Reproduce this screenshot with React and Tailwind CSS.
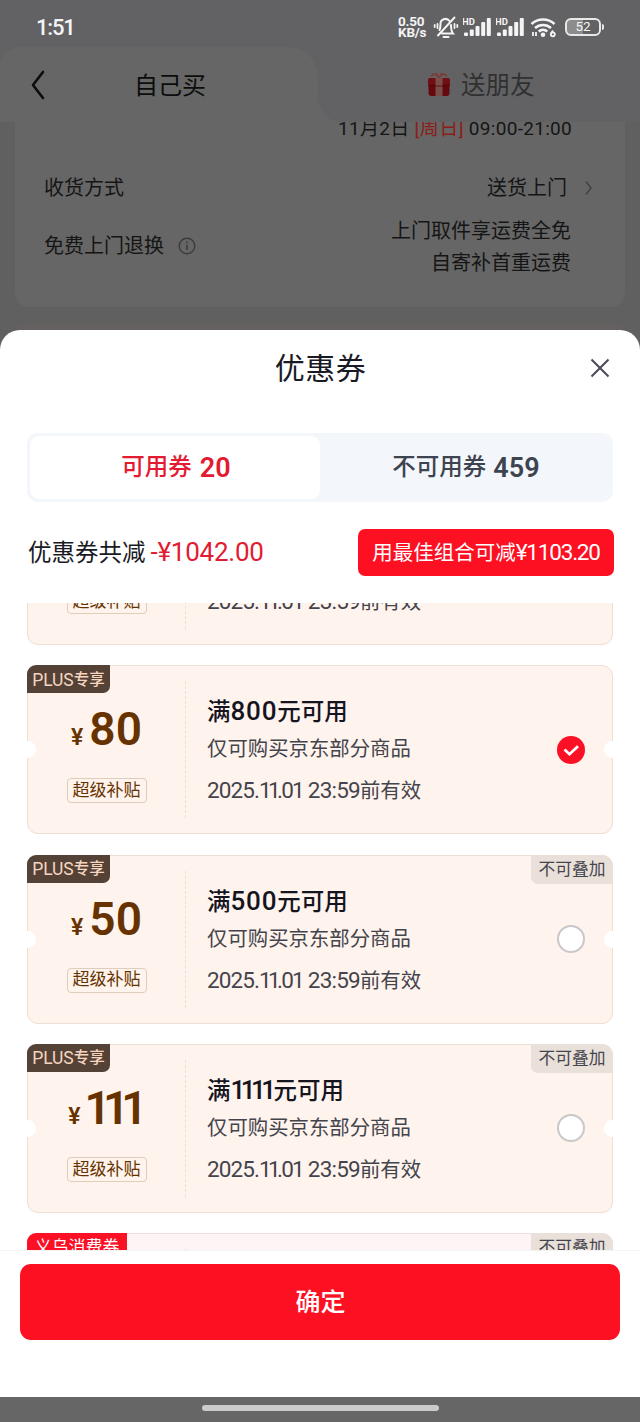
import React from "react";

function StatusBar() {
  return (
    <div className="flex h-[47px] items-center justify-between bg-[#626264] pt-[7px] pl-[36px] pr-[36px] text-[#f4f4f4]">
      <span className="pt-px text-[22px] leading-6 font-medium tracking-[-1.2px]">1:51</span>
      <div className="flex items-center">
        <div className="w-[32px] text-[13.500px] leading-[11px] font-bold tracking-[-0.2px] whitespace-nowrap">
          <div>0.50</div>
          <div>KB/s</div>
        </div>
        <svg className="ml-[3px]" width="26" height="24" viewBox="0 0 26 24" fill="none" stroke="#f4f4f4" strokeWidth="2" strokeLinecap="round">
          <path d="M9 18.500h11c-2-2.500-2-4-2-8.500M6.500 15c1-2 1-3.500 1-5.500a5 5 0 0 1 9-3.500M21.500 2.500 5 20.500M10.500 22h5" />
          <path d="M4.500 9v4M1.700 10v2M21.500 9v4M24.300 10v2" strokeWidth="1.800" />
        </svg>
        <Signal className="ml-[4px]" />
        <Signal className="ml-[5px]" />
        <svg className="ml-[6px]" width="27" height="22" viewBox="0 0 27 22" fill="none" stroke="#f4f4f4" strokeWidth="2.600">
          <path d="M1.500 8a17 17 0 0 1 23 0M5 12a12 12 0 0 1 16 0M8.700 15.500a6.500 6.500 0 0 1 8.600 0" />
          <circle cx="13" cy="18.700" r="2.300" fill="#f4f4f4" stroke="none" />
          <path d="M3 16v4M6 20v-4M23 14.500l-2.200 3.500" strokeWidth="1.800" />
          <circle cx="22.800" cy="18.300" r="2" strokeWidth="1.800" />
        </svg>
        <div className="ml-[8px] flex h-[18px] w-[36px] items-center justify-center rounded-[6px] border-2 border-[#e8e8e8] bg-linear-to-r from-[#8c8c8c] from-50% to-transparent to-50% text-[13.500px] leading-none">
          52
        </div>
        <div className="ml-[1px] h-[6px] w-[2px] rounded-r bg-[#e8e8e8]" />
      </div>
    </div>
  );
}

function Signal({ className }) {
  return (
    <svg className={className} width="28" height="20" viewBox="0 0 28 20" fill="#f4f4f4">
      <text x="-1" y="7.500" fontSize="9.500" fontWeight="700" fontFamily="Roboto, sans-serif">HD</text>
      <rect x="1" y="15.500" width="4" height="3.500" rx="1" />
      <rect x="6.800" y="12.500" width="4" height="6.500" rx="1" />
      <rect x="12.500" y="9" width="4" height="10" rx="1" />
      <rect x="18.200" y="5" width="4" height="14" rx="1" />
      <rect x="23.800" y="1" width="4" height="18" rx="1" />
    </svg>
  );
}

function Gift() {
  return (
    <svg width="24" height="25" viewBox="0 0 24 25">
      <path d="M12 6C9 1 4 1 5 5M12 6c3-5 8-5 7-1M12 6 9 1M12 6l3-5" fill="none" stroke="#7d3a32" strokeWidth="1.500" />
      <rect x="1" y="6" width="22" height="9" rx="2" fill="#701014" />
      <rect x="1.500" y="12" width="21" height="12" rx="3" fill="#66090e" />
      <path d="M8.500 6h7v18h-7z" fill="#785049" />
      <path d="M1.500 14h21" stroke="#540609" strokeWidth="0.800" />
    </svg>
  );
}

function OrderPage() {
  return (
    <div className="h-[350px] bg-[#606060] text-[#151515]">
      <StatusBar />
      <div className="flex h-[75px] bg-[#626264]">
        <div className="flex w-[318px] items-center rounded-tl-[20px] rounded-tr-[30px] bg-[#666666]">
          <svg className="ml-[30px]" width="16" height="32" viewBox="0 0 16 32" fill="none" stroke="#0c0c0c" strokeWidth="2.600" strokeLinecap="round" strokeLinejoin="round">
            <path d="M13 3 3 16l10 13" />
          </svg>
          <span className="ml-[88px] pt-[2px] text-[24px] text-[#0c0c0c]">自己买</span>
        </div>
        <div className="flex flex-1 bg-linear-to-b from-[#626264] from-50% to-[#666666] to-50%">
          <div className="flex flex-1 items-center rounded-bl-[24px] bg-[#626264] pl-[109px]">
            <Gift />
            <span className="ml-[10px] pt-[3px] text-[24.500px] text-[#303031]">送朋友</span>
          </div>
        </div>
      </div>
      <div className="mx-[15px] h-[185px] rounded-b-[14px] bg-[#666666] px-[29px] text-[20px]">
        <div className="h-[17px] overflow-hidden pr-[24px]">
          <div className="mt-[-8px] text-right text-[19px] leading-[30px] tracking-[0.3px]">
            <span>11月2日</span> <span className="text-[#8c1d18]">[周日]</span>{" "}
            <span>09:00-21:00</span>
          </div>
        </div>
        <div className="mt-[34px] flex h-[30px] items-center justify-between">
          <span>收货方式</span>
          <span className="flex items-center">
            送货上门
            <svg className="ml-[17px]" width="12" height="16" viewBox="0 0 12 16" fill="none" stroke="#434343" strokeWidth="1.500">
              <path d="M2 1.500 7 8l-5 6.500" />
            </svg>
          </span>
        </div>
        <div className="mt-[11px] flex justify-between pr-[25px]">
          <span className="flex h-[64px] items-center">
            免费上门退换
            <svg className="ml-[14px]" width="18" height="18" viewBox="0 0 18 18" fill="none" stroke="#3c3c3c" strokeWidth="1.400">
              <circle cx="9" cy="9" r="7.800" />
              <path d="M9 7.700V13M9 4.500v1.700" strokeWidth="1.600" />
            </svg>
          </span>
          <div className="pt-px text-right leading-[32px]">
            <div>上门取件享运费全免</div>
            <div>自寄补首重运费</div>
          </div>
        </div>
      </div>
      <div className="mx-[15px] mt-[16px] h-[20px] rounded-t-[14px] bg-[#666161]" />
    </div>
  );
}

function Tag({ children, exclusive }) {
  return exclusive ? (
    <div className="absolute -top-px -left-px flex h-[28px] w-[83px] items-center justify-center rounded-tl-[9px] rounded-br-[7px] bg-[#544236] pt-px whitespace-nowrap text-[#f6d5c0]">
      <span className="text-[17.500px] tracking-[-0.1px]">PLUS</span>
      <span className="pt-px text-[15.500px] font-medium">{children}</span>
    </div>
  ) : (
    <div className="absolute -top-px -left-px flex h-[28px] w-[100px] items-center justify-center rounded-tl-[9px] rounded-br-[7px] bg-[#fb1026] pt-px text-[17px] text-white">
      {children}
    </div>
  );
}

function Coupon({ amount, tight, selected, stackable, city }) {
  return (
    <div
      className={
        city
          ? "relative flex h-[169px] shrink-0 rounded-[11px] border border-[#efdcdd] bg-[#fef4f5]"
          : "relative flex h-[169px] shrink-0 rounded-[11px] border border-[#eeded4] bg-[#fff3ed]"
      }
    >
      {city ? <Tag>义乌消费券</Tag> : <Tag exclusive>专享</Tag>}
      {!stackable && (
        <div className="absolute -top-px -right-px flex h-[29px] w-[82px] items-center justify-center rounded-tr-[11px] rounded-bl-[7px] bg-[#e9e0da] text-[16.800px] text-[#44444c]">
          不可叠加
        </div>
      )}
      <div className="absolute top-[75px] -left-px h-[17px] w-[9px] rounded-r-full bg-white" />
      <div className="absolute top-[75px] -right-px h-[17px] w-[9px] rounded-l-full bg-white" />
      <div className="flex w-[157px] flex-col items-center text-[#663300]">
        <div className="mt-[36px] flex h-[56px] items-baseline font-semibold">
          <span className="text-[23px]">¥</span>
          <span className={tight ? "ml-[4px] text-[46px] leading-[54px] tracking-[-7.800px] pr-[5px]" : "ml-[6px] text-[46px] leading-[54px]"}>{amount}</span>
        </div>
        <div className="mt-[20px] flex h-[25px] w-[80px] items-center justify-center rounded-[4px] border border-[#dfcdbb] text-[17px]">
          超级补贴
        </div>
      </div>
      <div className="my-[15px] w-px border-l border-dashed border-[#ecdfd8]" />
      <div className="flex flex-1 flex-col pt-[28px] pl-[21px] text-[20.400px] whitespace-nowrap text-[#44444c]">
        <div className="h-[34px] text-[23.500px] leading-[34px] font-medium text-[#15151f]">
          满
          <span className={tight ? "text-[26px] tracking-[-4.500px]" : "text-[26px] tracking-[0.800px]"}>{amount === "111" ? "1111" : amount + "0"}</span>
          <span className={tight ? "ml-[2px]" : ""}>元可用</span>
        </div>
        <div className="mt-[6px] h-[30px] leading-[30px]">仅可购买京东部分商品</div>
        <div className="mt-[11px] h-[30px] leading-[30px]">
          <span className="text-[22.500px]">
            <span className="tracking-[-0.900px]">2025.</span>
            <span className="tracking-[-3.700px]">11.</span>
            <span className="ml-[2px] tracking-[-1.800px]">01</span>
            <span className="ml-[5px] tracking-[-0.800px]">23:59</span>
          </span>
          前有效
        </div>
      </div>
      <div className="mr-[27px] flex items-center">
        {selected ? (
          <svg width="28" height="28" viewBox="0 0 28 28">
            <circle cx="14" cy="14" r="14" fill="#fb1026" />
            <path d="m7.500 13.500 5 4.700 8.500-8" fill="none" stroke="#fff" strokeWidth="2.800" />
          </svg>
        ) : (
          <div className="size-[28px] rounded-full border-2 border-[#c9c7c9] bg-white" />
        )}
      </div>
    </div>
  );
}

export default function App() {
  return (
    <div className="flex h-[1422px] w-[640px] flex-col overflow-hidden bg-[#606060] font-[Roboto,'Noto_Sans_CJK_SC',sans-serif]">
      <OrderPage />
      <div className="relative -mt-[20px] flex h-[1067px] flex-col rounded-t-[20px] bg-white">
        <div className="flex h-[76px] items-center justify-end pr-[30px]">
          <h1 className="flex-1 pl-[51px] text-center text-[30px] tracking-[0.500px] text-[#191a24]">优惠券</h1>
          <svg width="20" height="20" viewBox="0 0 20 20" fill="none" stroke="#4a4a55" strokeWidth="2">
            <path d="m1.500 1.500 17 17M18.500 1.500l-17 17" />
          </svg>
        </div>
        <div className="mx-[27px] mt-[27px] flex h-[69px] rounded-[11px] bg-[#f3f6fa] p-[3px] text-[23.500px]">
          <div className="flex w-[290px] items-center justify-center rounded-[9px] bg-white pt-px pl-[2px] font-medium text-[#e31b32]">
            可用券<span className="ml-[8px] text-[27px] font-semibold">20</span>
          </div>
          <div className="flex flex-1 items-center justify-center pt-px pl-[2px] font-medium text-[#3e4350]">
            不可用券<span className="ml-[7px] text-[27px] font-semibold">459</span>
          </div>
        </div>
        <div className="mt-[27px] mr-[26px] ml-[28px] flex h-[47px] items-center justify-between">
          <div className="flex items-baseline text-[23.500px] text-[#191a24]">
            优惠券共减<span className="ml-[5px] text-[26px] tracking-[-0.250px] text-[#e31b32]">-¥1042.00</span>
          </div>
          <div className="flex h-[47px] w-[256px] items-center justify-center rounded-[7px] bg-[#fe1023] text-[20.500px] text-white">
            <span>用最佳组合可减<span className="text-[22.500px] tracking-[-1.200px]">¥1103.20</span></span>
          </div>
        </div>
        <div className="mt-[27px] h-[648px] overflow-hidden border-b border-[#f3f3f3] px-[27px]">
          <div className="mt-[-127px] flex flex-col gap-[20.300px]">
            <Coupon amount="80" selected stackable />
            <Coupon amount="80" selected stackable />
            <Coupon amount="50" />
            <Coupon amount="111" tight />
            <Coupon amount="10" city />
          </div>
        </div>
        <div className="mx-[20px] mt-[13px] flex h-[76px] items-center justify-center rounded-[11px] bg-[#fe1023] pt-[2px] pl-px text-[25px] font-medium text-white">
          确定
        </div>
      </div>
      <div className="flex h-[25px] justify-center bg-[#666666] pt-[8px]">
        <div className="h-[6px] w-[237px] rounded-full bg-[#cbcbcb]" />
      </div>
    </div>
  );
}
